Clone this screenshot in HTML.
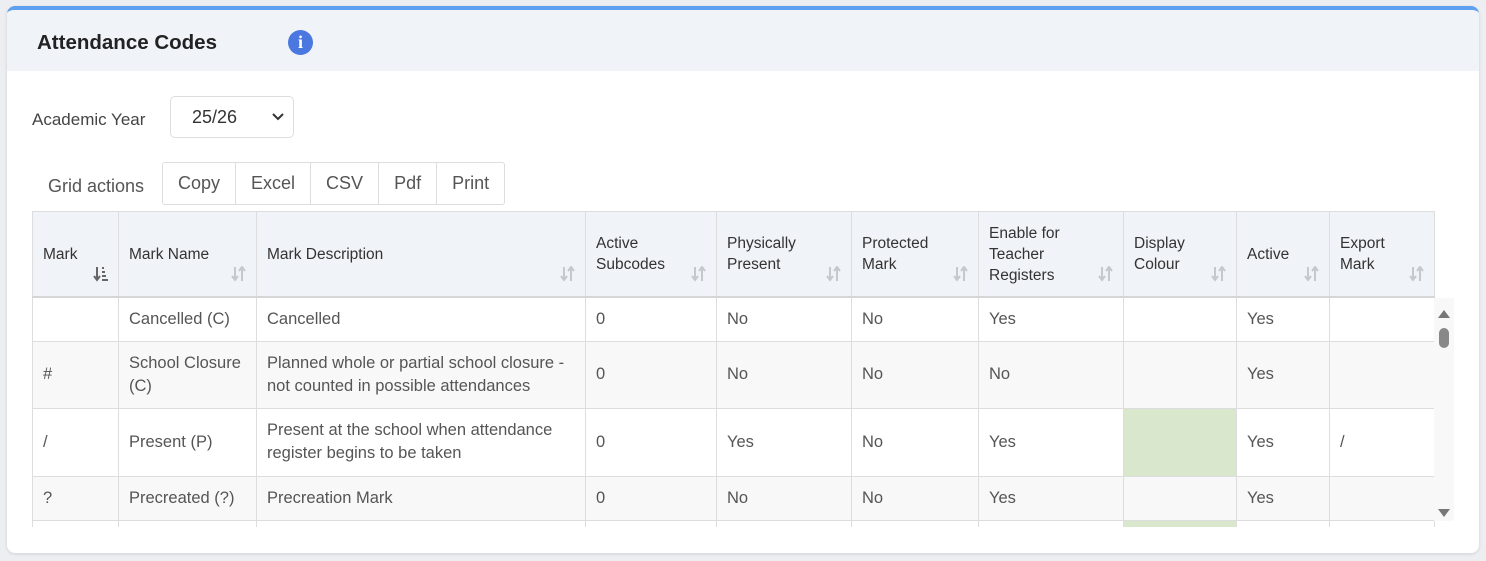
<!DOCTYPE html>
<html><head><style>
body{margin:0;width:1486px;height:561px;background:#eceef1;font-family:"Liberation Sans",sans-serif;overflow:hidden;position:relative}
.card{position:absolute;left:7px;top:6px;width:1472px;height:547px;background:#fff;border-radius:8px;border-top:4px solid #5e9ff0;box-sizing:border-box;overflow:hidden;box-shadow:0 1px 3px rgba(0,0,0,.12)}
.hd{height:61px;background:#f0f3f8}
.hd h1{position:absolute;left:30px;top:21px;margin:0;font-size:20.5px;font-weight:bold;color:#222}
.info{position:absolute;left:281px;top:20px;width:25px;height:25px;border-radius:50%;background:#4a78e0;color:#fff;font:bold 18px "Liberation Serif",serif;text-align:center;line-height:25px}
.lbl{position:absolute;left:25px;top:100px;font-size:17px;color:#444}
.sel{position:absolute;left:163px;top:86px;width:124px;height:42px;border:1px solid #ddd;border-radius:5px;box-sizing:border-box;font-size:18px;color:#333;padding:10px 0 0 21px}
.sel svg{position:absolute;right:9px;top:16px}
.ga{position:absolute;left:41px;top:166px;font-size:18px;color:#555}
.btns{position:absolute;left:155px;top:152px;height:41px;display:flex;border:1px solid #ddd;border-radius:3px}
.btns div{border-right:1px solid #ddd;font-size:18px;color:#555;padding:0 15px;line-height:41px}
.btns div:last-child{border-right:0}
.tw{position:absolute;left:25px;top:201px;width:1403px;height:316px;overflow:hidden}
table{border-collapse:collapse;table-layout:fixed;font-size:16.5px}
td,th{border:1px solid #ddd;padding:0 10px;color:#555;text-align:left;vertical-align:middle;line-height:23px}
th{background:#f0f3f8;color:#333;font-weight:normal;font-size:15.5px;height:84px;border-bottom:2px solid #d6d6d6;position:relative;line-height:21px}
th svg{position:absolute;right:9px;bottom:14px}
tr.g td{background:#f8f8f8}
.sb{position:absolute;left:1434px;top:298px;width:20px;height:223px;background:#f8f8f8}
</style></head><body>
<div class="card">
<div class="hd"><h1>Attendance Codes</h1><div class="info">i</div></div>
<div class="lbl">Academic Year</div>
<div class="sel">25/26<svg width="12" height="8"><path d="M1 1l5 5 5-5" stroke="#333" stroke-width="2" fill="none"/></svg></div>
<div class="ga">Grid actions</div>
<div class="btns"><div>Copy</div><div>Excel</div><div>CSV</div><div>Pdf</div><div>Print</div></div>
<div class="tw"><table>
<colgroup><col style="width:86px"><col style="width:138px"><col style="width:329px"><col style="width:131px"><col style="width:135px"><col style="width:127px"><col style="width:145px"><col style="width:113px"><col style="width:93px"><col style="width:105px"></colgroup>
<tr><th>Mark<svg width="16" height="16"><path d="M4 1v12M1 10l3 4 3-4" stroke="#666" stroke-width="2" fill="none"/><path d="M9 2h2M9 6h3M9 10h4M9 14h6" stroke="#666" stroke-width="2"/></svg></th>
<th>Mark Name<svg class="s" width="16" height="16"><path d="M4 1v13M1 10l3 4 3-4M11 15V2M8 5l3-4 3 4" stroke="#c5c9ce" stroke-width="2" fill="none"/></svg></th>
<th>Mark Description<svg width="16" height="16"><path d="M4 1v13M1 10l3 4 3-4M11 15V2M8 5l3-4 3 4" stroke="#c5c9ce" stroke-width="2" fill="none"/></svg></th>
<th>Active<br>Subcodes<svg width="16" height="16"><path d="M4 1v13M1 10l3 4 3-4M11 15V2M8 5l3-4 3 4" stroke="#c5c9ce" stroke-width="2" fill="none"/></svg></th>
<th>Physically<br>Present<svg width="16" height="16"><path d="M4 1v13M1 10l3 4 3-4M11 15V2M8 5l3-4 3 4" stroke="#c5c9ce" stroke-width="2" fill="none"/></svg></th>
<th>Protected<br>Mark<svg width="16" height="16"><path d="M4 1v13M1 10l3 4 3-4M11 15V2M8 5l3-4 3 4" stroke="#c5c9ce" stroke-width="2" fill="none"/></svg></th>
<th>Enable for<br>Teacher<br>Registers<svg width="16" height="16"><path d="M4 1v13M1 10l3 4 3-4M11 15V2M8 5l3-4 3 4" stroke="#c5c9ce" stroke-width="2" fill="none"/></svg></th>
<th>Display<br>Colour<svg width="16" height="16"><path d="M4 1v13M1 10l3 4 3-4M11 15V2M8 5l3-4 3 4" stroke="#c5c9ce" stroke-width="2" fill="none"/></svg></th>
<th>Active<svg width="16" height="16"><path d="M4 1v13M1 10l3 4 3-4M11 15V2M8 5l3-4 3 4" stroke="#c5c9ce" stroke-width="2" fill="none"/></svg></th>
<th>Export<br>Mark<svg width="16" height="16"><path d="M4 1v13M1 10l3 4 3-4M11 15V2M8 5l3-4 3 4" stroke="#c5c9ce" stroke-width="2" fill="none"/></svg></th></tr>
<tr style="height:44px"><td></td><td>Cancelled (C)</td><td>Cancelled</td><td>0</td><td>No</td><td>No</td><td>Yes</td><td></td><td>Yes</td><td></td></tr>
<tr class="g" style="height:67px"><td>#</td><td>School Closure (C)</td><td>Planned whole or partial school closure - not counted in possible attendances</td><td>0</td><td>No</td><td>No</td><td>No</td><td></td><td>Yes</td><td></td></tr>
<tr style="height:68px"><td>/</td><td>Present (P)</td><td>Present at the school when attendance register begins to be taken</td><td>0</td><td>Yes</td><td>No</td><td>Yes</td><td style="background:#d9e8cd"></td><td>Yes</td><td>/</td></tr>
<tr class="g" style="height:44px"><td>?</td><td>Precreated (?)</td><td>Precreation Mark</td><td>0</td><td>No</td><td>No</td><td>Yes</td><td></td><td>Yes</td><td></td></tr>
<tr style="height:44px"><td></td><td></td><td></td><td></td><td></td><td></td><td></td><td style="background:#d9e8cd"></td><td></td><td></td></tr>
</table></div>
</div>
<div class="sb"><svg width="20" height="223"><path d="M4 20l6-8 6 8z" fill="#777"/><rect x="5" y="30" width="10" height="20" rx="5" fill="#888"/><path d="M4 211l6 8 6-8z" fill="#777"/></svg></div>
</body></html>
